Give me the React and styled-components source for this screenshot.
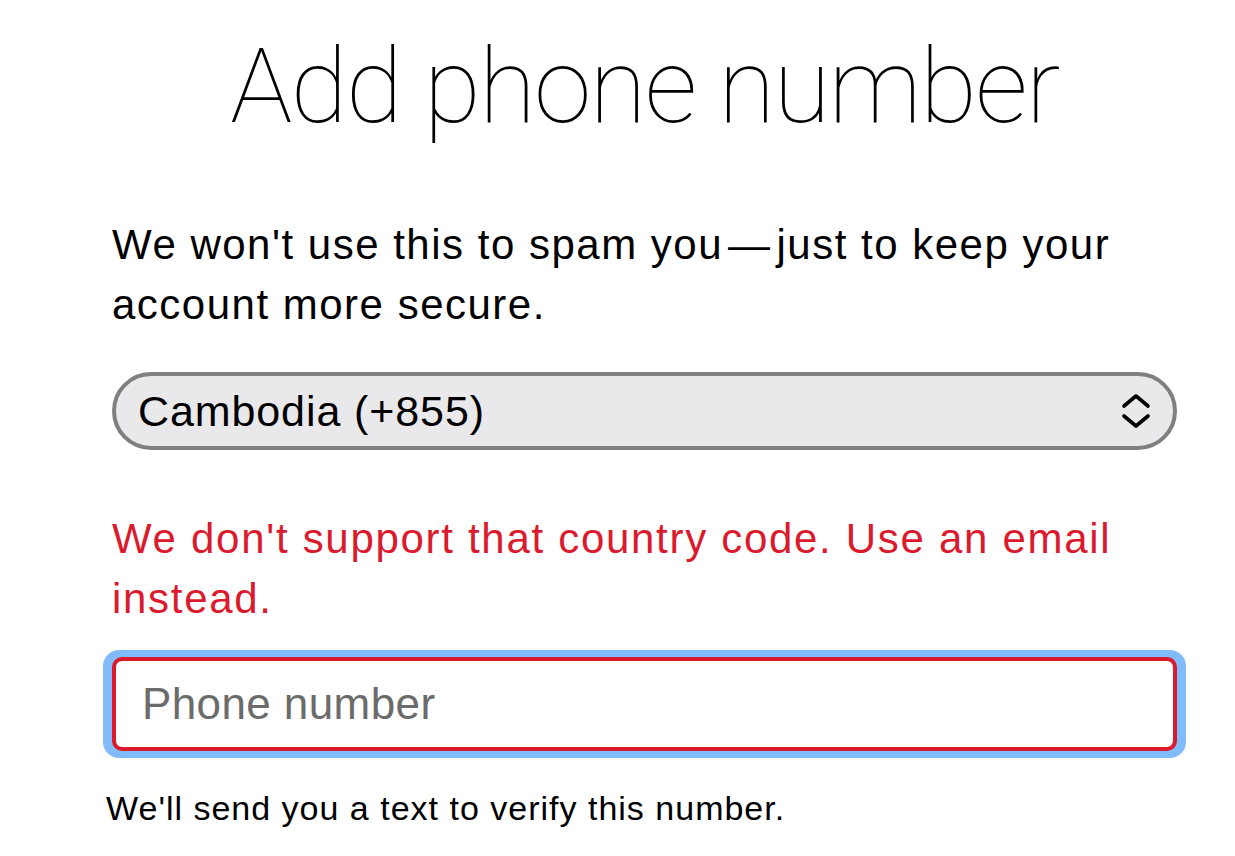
import styled, { createGlobalStyle } from 'styled-components';

const GlobalStyle = createGlobalStyle`
  html, body {
    margin: 0;
    padding: 0;
    background: #ffffff;
  }
  body {
    font-family: 'Liberation Sans', Arial, sans-serif;
    color: #000;
  }
`;

const Page = styled.div`
  width: 1235px;
  height: 856px;
  overflow: hidden;
  display: flex;
  flex-direction: column;
  padding: 0 58px 0 112px;
  box-sizing: border-box;
`;

const Title = styled.h1`
  margin: 27px 0 0 0;
  font-family: Roboto, 'Liberation Sans', sans-serif;
  font-weight: 100;
  font-size: 104px;
  line-height: 120px;
  letter-spacing: -1.8px;
  text-align: center;
  white-space: nowrap;
`;

const Lead = styled.p`
  margin: 68px 0 0 0;
  font-size: 42px;
  line-height: 60px;
  letter-spacing: 1.5px;
`;

const SelectBox = styled.div`
  margin-top: 37px;
  height: 78px;
  box-sizing: border-box;
  border: 4px solid #808080;
  border-radius: 40px;
  background: #e9e9eb;
  display: flex;
  align-items: center;
  justify-content: space-between;
  padding: 0 22px 0 22px;
  font-size: 43px;
  letter-spacing: 0.9px;
`;

const Chevrons = styled.svg`
  width: 30px;
  height: 36px;
`;

const ErrorText = styled.p`
  margin: 59px 0 0 0;
  font-size: 42px;
  line-height: 60px;
  letter-spacing: 1.7px;
  color: #db1a2e;
`;

const InputRing = styled.div`
  margin: 21px 0 0 -9px;
  padding: 7px 9px;
  border-radius: 16px;
  background: #80bcfb;
  width: calc(100% + 18px);
  box-sizing: border-box;
`;

const Input = styled.div`
  height: 94px;
  box-sizing: border-box;
  border: 4px solid #db1a2e;
  border-radius: 10px;
  background: #fff;
  display: flex;
  align-items: center;
  padding-left: 26px;
  font-size: 44px;
  letter-spacing: 0.4px;
  color: #6b6b6b;
`;

const Hint = styled.p`
  margin: 30px 0 0 -6px;
  font-size: 34px;
  line-height: 40px;
  letter-spacing: 1px;
`;

export default function App() {
  return (
    <>
      <GlobalStyle />
      <Page>
        <Title>Add phone number</Title>
        <Lead>
          We won't use this to spam you{'\u200A—\u200A'}just to keep your account more secure.
        </Lead>
        <SelectBox>
          <span>Cambodia (+855)</span>
          <Chevrons viewBox="0 0 30 36" fill="none" stroke="#000" strokeWidth="3.6" strokeLinecap="round" strokeLinejoin="round">
            <polyline points="3,13 15,3 27,13" />
            <polyline points="3,23 15,33 27,23" />
          </Chevrons>
        </SelectBox>
        <ErrorText>We don't support that country code. Use an email instead.</ErrorText>
        <InputRing>
          <Input>Phone number</Input>
        </InputRing>
        <Hint>We'll send you a text to verify this number.</Hint>
      </Page>
    </>
  );
}
